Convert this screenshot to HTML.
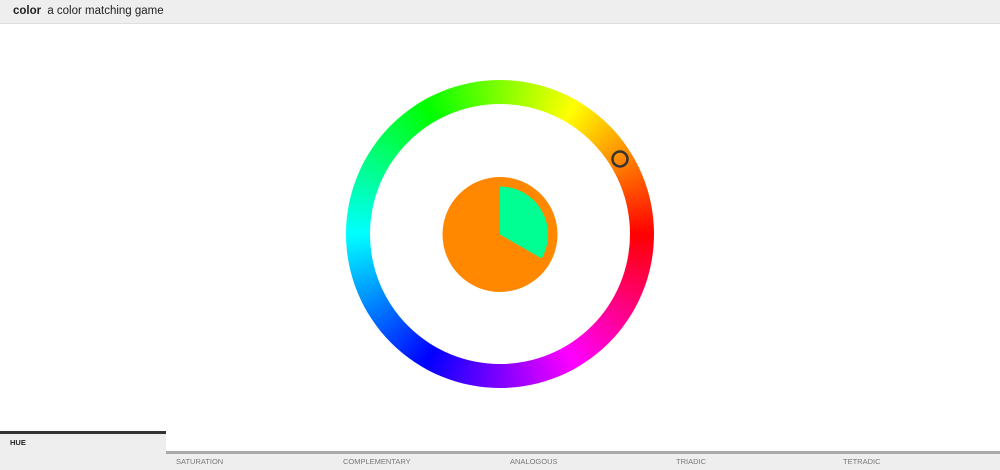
<!DOCTYPE html>
<html><head><style>
*{margin:0;padding:0;box-sizing:border-box}
body{width:1000px;height:470px;background:#fff;font-family:"Liberation Sans",sans-serif;position:relative;overflow:hidden}
.hdr{position:absolute;left:0;top:0;width:1000px;height:24px;background:#eee;border-bottom:1px solid #ddd;font-size:11.5px;color:#222;line-height:23px;padding-left:13px}
.hdr b{font-weight:bold;margin-right:3px}
.wheel{position:absolute;left:346px;top:80px;width:308px;height:308px;border-radius:50%;background:conic-gradient(from 90deg,#f00,#f0f 60deg,#00f 120deg,#0ff 180deg,#0f0 240deg,#ff0 300deg,#f00 360deg)}
.inner{position:absolute;left:370px;top:104px;width:260px;height:260px;border-radius:50%;background:#fff}
.tabs{position:absolute;left:0;top:431px;width:1000px;height:39px}
.t{position:absolute;font-size:7.5px;color:#777;top:26px}
</style></head><body>
<div class="hdr"><b>color</b> a color matching game</div>
<div class="wheel"></div><div class="inner"></div>
<svg style="position:absolute;left:0;top:0" width="1000" height="470">
<circle cx="500" cy="234.5" r="57.5" fill="#ff8800"/>
<path d="M500 234.5 L500 186.5 A48 48 0 0 1 541.6 258.5 Z" fill="#00ff92"/>
<circle cx="620" cy="159" r="7.5" fill="none" stroke="#333" stroke-width="2.5"/>
</svg>
<div class="tabs">
<div style="position:absolute;left:0;top:0;width:166px;height:3px;background:#333"></div>
<div style="position:absolute;left:0;top:3px;width:166px;height:36px;background:#eee"></div>
<div style="position:absolute;left:166px;top:20px;width:834px;height:3px;background:#aaa"></div>
<div style="position:absolute;left:166px;top:23px;width:834px;height:16px;background:#eee"></div>
<div class="t" style="left:10px;top:7px;color:#222;font-weight:bold">HUE</div>
<div class="t" style="left:176px">SATURATION</div>
<div class="t" style="left:343px">COMPLEMENTARY</div>
<div class="t" style="left:510px">ANALOGOUS</div>
<div class="t" style="left:676px">TRIADIC</div>
<div class="t" style="left:843px">TETRADIC</div>
</div>
</body></html>
